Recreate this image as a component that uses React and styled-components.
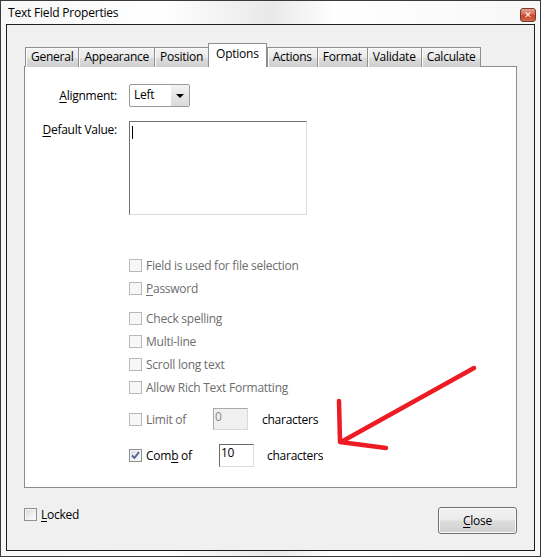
import React from "react";
import styled, { createGlobalStyle, css } from "styled-components";

const Global = createGlobalStyle`
  html, body { margin: 0; padding: 0; background: #ffffff; }
  body { font-family: "Open Sans", "Noto Sans", sans-serif; font-size: 12px; color: #000; }
  * { box-sizing: border-box; }
`;

const Window = styled.div`
  position: relative;
  width: 541px;
  height: 557px;
  border: 1px solid #3a3a3a;
  padding: 0 5px 5px 5px;
  display: flex;
  flex-direction: column;
  background: linear-gradient(90deg, #f7f7f7 0%, #ffffff 30%, #e9e9e9 50%, #ffffff 62%, #f7f7f7 100%);
`;

const TitleBar = styled.div`
  height: 23px;
  flex: none;
  display: flex;
  align-items: flex-start;
  justify-content: space-between;
  padding-left: 2px;
`;

const Title = styled.span`
  font-size: 12px;
  line-height: 14px;
  margin-top: 5px;
  letter-spacing: -0.2px;
`;

const CloseX = styled.div`
  width: 16px;
  height: 14px;
  margin-top: 7px;
  margin-right: -1px;
  border: 1px solid #7b3a2e;
  border-radius: 3px;
  background: linear-gradient(180deg, #e8a08e 0%, #d86a50 45%, #c7472b 55%, #d2684c 100%);
  display: flex;
  align-items: center;
  justify-content: center;
  color: #fff;
  font-family: "DejaVu Sans", sans-serif;
  font-size: 9px;
  font-weight: bold;
  line-height: 1;
`;

const Client = styled.div`
  flex: 1;
  border: 1px solid #1e1e1e;
  background: #f0f0f0;
  padding: 18px 17px 16px 17px;
  display: flex;
  flex-direction: column;
`;

const TabStrip = styled.div`
  display: flex;
  flex: none;
  align-items: flex-end;
  padding-left: 1px;
  height: 24px;
  position: relative;
  z-index: 1;
  margin-bottom: -1px;
`;

const Tab = styled.div`
  height: 20px;
  padding: 0 5px;
  border: 1px solid #8e8f8f;
  border-bottom: none;
  margin-right: -1px;
  background: linear-gradient(180deg, #f3f3f3 0%, #ebebeb 50%, #dddddd 52%, #cfcfcf 100%);
  box-shadow: inset 1px 1px 0 #fbfbfb;
  font-size: 12px;
  line-height: 18px;
  white-space: nowrap;
  letter-spacing: -0.25px;
  ${(p) =>
    p.$active &&
    css`
      height: 24px;
      padding: 0 7px;
      background: #ffffff;
      box-shadow: none;
      line-height: 19px;
      position: relative;
      z-index: 2;
      margin-left: 0;
      margin-right: 0;
    `}
`;

const Panel = styled.div`
  height: 422px;
  flex: none;
  background: #ffffff;
  border: 1px solid #898c95;
  padding-top: 17px;
  display: flex;
  flex-direction: column;
`;

const FieldRow = styled.div`
  display: flex;
  align-items: ${(p) => (p.$top ? "flex-start" : "center")};
  margin-top: ${(p) => p.$mt || 0}px;
`;

const FieldLabel = styled.div`
  width: 92px;
  text-align: right;
  margin-right: 12px;
  letter-spacing: -0.25px;
  white-space: nowrap;
`;

const U = styled.span`
  text-decoration: underline;
  text-underline-offset: 2px;
`;

const Select = styled.div`
  width: 61px;
  height: 23px;
  border: 1px solid #9a9a9a;
  border-radius: 2px;
  display: flex;
  background: #fff;
`;

const SelectValue = styled.div`
  flex: 1;
  padding-left: 4px;
  line-height: 20px;
  letter-spacing: -0.25px;
`;

const SelectArrow = styled.div`
  width: 18px;
  background: linear-gradient(180deg, #f4f4f4 0%, #e6e6e6 50%, #dadada 100%);
  display: flex;
  align-items: center;
  justify-content: center;
  &::after {
    content: "";
    border-left: 4px solid transparent;
    border-right: 4px solid transparent;
    border-top: 4px solid #000;
    margin-top: 1px;
  }
`;

const TextArea = styled.div`
  width: 178px;
  height: 94px;
  background: #fff;
  border: 1px solid;
  border-color: #707070 #dcdcdc #dcdcdc #707070;
  padding: 4px 2px;
`;

const Caret = styled.div`
  width: 1px;
  height: 13px;
  background: #000;
`;

const OptionsCol = styled.div`
  margin-left: 104px;
  display: flex;
  flex-direction: column;
`;

const Group = styled.div`
  display: flex;
  flex-direction: column;
  margin-top: ${(p) => p.$mt || 0}px;
`;

const CheckRow = styled.div`
  display: flex;
  align-items: center;
  height: ${(p) => p.$h || 23}px;
  color: ${(p) => (p.$disabled ? "#6d6d6d" : "#000")};
  letter-spacing: -0.25px;
  white-space: nowrap;
`;

const Box = styled.span`
  width: 13px;
  height: 13px;
  flex: none;
  margin-right: 4px;
  border: 1px solid ${(p) => (p.$disabled ? "#b9b9b9" : "#8e8f8f")};
  background: ${(p) =>
    p.$disabled
      ? "#f7f7f7"
      : "linear-gradient(135deg, #d8d8d8 0%, #ececec 50%, #ffffff 100%)"};
  box-shadow: inset 0 0 0 1px ${(p) => (p.$disabled ? "#f7f7f7" : "#f4f4f4")};
  display: flex;
  align-items: center;
  justify-content: center;
`;

const CheckLabel = styled.span`
  width: ${(p) => (p.$w ? `${p.$w}px` : "auto")};
`;

const SmallInput = styled.div`
  width: 35px;
  height: ${(p) => p.$h || 22}px;
  border: 1px solid;
  border-color: ${(p) =>
    p.$disabled ? "#a9a9a9 #d9d9d9 #d9d9d9 #a9a9a9" : "#6b6b6b #dcdcdc #dcdcdc #6b6b6b"};
  background: ${(p) => (p.$disabled ? "#f0f0f0" : "#fff")};
  color: ${(p) => (p.$disabled ? "#8a8a8a" : "#000")};
  line-height: 16px;
  padding-left: 1px;
  flex: none;
`;

const Suffix = styled.span`
  margin-left: ${(p) => p.$ml}px;
  color: #000;
`;

const Footer = styled.div`
  display: flex;
  flex: none;
  justify-content: space-between;
  align-items: flex-start;
  margin-top: 19px;
`;

const LockedRow = styled.div`
  display: flex;
  align-items: center;
  height: 13px;
  margin-top: 1px;
  letter-spacing: -0.25px;
`;

const Button = styled.div`
  width: 79px;
  height: 27px;
  border: 1px solid #707070;
  border-radius: 3px;
  background: linear-gradient(180deg, #f2f2f2 0%, #ebebeb 48%, #dddddd 52%, #cfcfcf 100%);
  box-shadow: inset 0 0 0 1px #fbfbfb;
  display: flex;
  align-items: center;
  justify-content: center;
  letter-spacing: -0.25px;
`;

const Annotation = styled.svg`
  position: absolute;
  left: -1px;
  top: -1px;
  pointer-events: none;
`;

const CheckMark = () => (
  <svg width="9" height="9" viewBox="0 0 9 9">
    <path d="M1 4.5 L3.5 7 L8 1" fill="none" stroke="#4b5e96" strokeWidth="1.8" />
  </svg>
);

const Check = ({ disabled, checked }) => (
  <Box $disabled={disabled}>{checked && <CheckMark />}</Box>
);

const tabs = ["General", "Appearance", "Position", "Options", "Actions", "Format", "Validate", "Calculate"];

export default function App() {
  return (
    <>
      <Global />
      <Window>
        <TitleBar>
          <Title>Text Field Properties</Title>
          <CloseX>✕</CloseX>
        </TitleBar>
        <Client>
          <TabStrip>
            {tabs.map((t) => (
              <Tab key={t} $active={t === "Options"}>
                {t}
              </Tab>
            ))}
          </TabStrip>
          <Panel>
            <FieldRow>
              <FieldLabel>
                <U>A</U>lignment:
              </FieldLabel>
              <Select>
                <SelectValue>Left</SelectValue>
                <SelectArrow />
              </Select>
            </FieldRow>
            <FieldRow $top $mt={14}>
              <FieldLabel>
                <U>D</U>efault Value:
              </FieldLabel>
              <TextArea>
                <Caret />
              </TextArea>
            </FieldRow>
            <OptionsCol>
              <Group $mt={39}>
                <CheckRow $disabled>
                  <Check disabled />
                  Field is used for file selection
                </CheckRow>
                <CheckRow $disabled>
                  <Check disabled />
                  <span>
                    <U>P</U>assword
                  </span>
                </CheckRow>
              </Group>
              <Group $mt={7}>
                <CheckRow $disabled>
                  <Check disabled />
                  Check spelling
                </CheckRow>
                <CheckRow $disabled>
                  <Check disabled />
                  Multi-line
                </CheckRow>
                <CheckRow $disabled>
                  <Check disabled />
                  Scroll long text
                </CheckRow>
                <CheckRow $disabled>
                  <Check disabled />
                  Allow Rich Text Formatting
                </CheckRow>
              </Group>
              <Group $mt={9}>
                <CheckRow $disabled $h={22}>
                  <Check disabled />
                  <CheckLabel $w={67}>Limit of</CheckLabel>
                  <SmallInput $disabled>0</SmallInput>
                  <Suffix $ml={14}>characters</Suffix>
                </CheckRow>
              </Group>
              <Group $mt={14}>
                <CheckRow $h={23}>
                  <Check checked />
                  <CheckLabel $w={73}>
                    Com<U>b</U> of
                  </CheckLabel>
                  <SmallInput $h={23}>10</SmallInput>
                  <Suffix $ml={13}>characters</Suffix>
                </CheckRow>
              </Group>
            </OptionsCol>
          </Panel>
          <Footer>
            <LockedRow>
              <Check />
              <span>
                <U>L</U>ocked
              </span>
            </LockedRow>
            <Button>
              <span>
                <U>C</U>lose
              </span>
            </Button>
          </Footer>
        </Client>
        <Annotation width="541" height="557" viewBox="0 0 541 557">
          <g fill="none" stroke="#ed1c24" strokeWidth="4.5" strokeLinecap="round" strokeLinejoin="round">
            <path d="M474 368 L341 442" />
            <path d="M339 401 L340 442 L386 448" />
          </g>
        </Annotation>
      </Window>
    </>
  );
}
